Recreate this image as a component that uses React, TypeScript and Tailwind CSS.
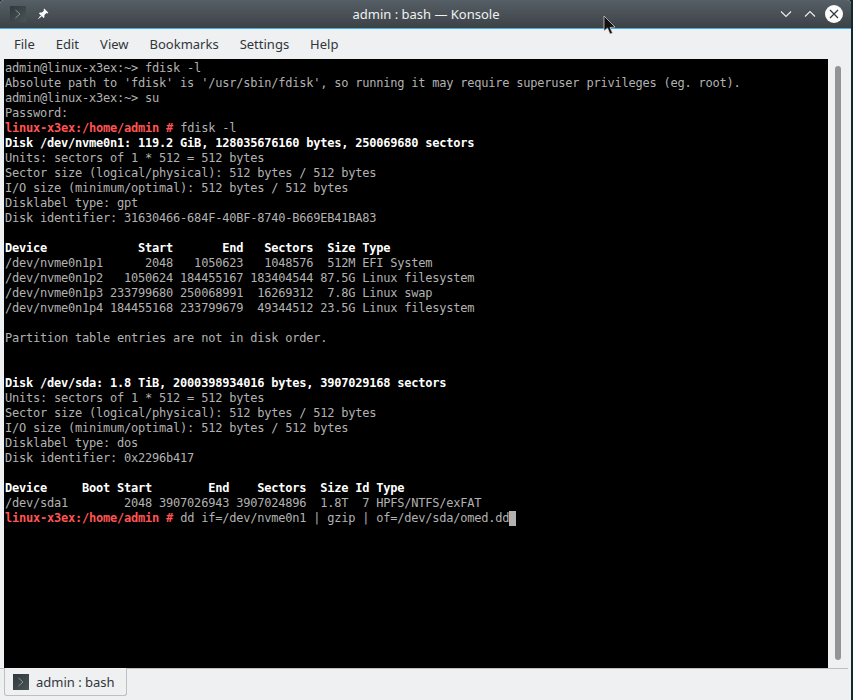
type Line = { text: string; kind?: 'bold' | 'prompt'; rest?: string }

const disk = (name: string, rest: string[]): Line[] => [{ text: name, kind: 'bold' }, ...rest.map((text) => ({ text }))]

const lines: Line[] = [
    { text: 'admin@linux-x3ex:~> fdisk -l' },
    { text: "Absolute path to 'fdisk' is '/usr/sbin/fdisk', so running it may require superuser privileges (eg. root)." },
    { text: 'admin@linux-x3ex:~> su' },
    { text: 'Password:' },
    { text: 'linux-x3ex:/home/admin #', kind: 'prompt', rest: ' fdisk -l' },
    ...disk('Disk /dev/nvme0n1: 119.2 GiB, 128035676160 bytes, 250069680 sectors', [
        'Units: sectors of 1 * 512 = 512 bytes',
        'Sector size (logical/physical): 512 bytes / 512 bytes',
        'I/O size (minimum/optimal): 512 bytes / 512 bytes',
        'Disklabel type: gpt',
        'Disk identifier: 31630466-684F-40BF-8740-B669EB41BA83',
        '',
    ]),
    ...disk('Device             Start       End   Sectors  Size Type', [
        '/dev/nvme0n1p1      2048   1050623   1048576  512M EFI System',
        '/dev/nvme0n1p2   1050624 184455167 183404544 87.5G Linux filesystem',
        '/dev/nvme0n1p3 233799680 250068991  16269312  7.8G Linux swap',
        '/dev/nvme0n1p4 184455168 233799679  49344512 23.5G Linux filesystem',
        '',
        'Partition table entries are not in disk order.',
        '',
        '',
    ]),
    ...disk('Disk /dev/sda: 1.8 TiB, 2000398934016 bytes, 3907029168 sectors', [
        'Units: sectors of 1 * 512 = 512 bytes',
        'Sector size (logical/physical): 512 bytes / 512 bytes',
        'I/O size (minimum/optimal): 512 bytes / 512 bytes',
        'Disklabel type: dos',
        'Disk identifier: 0x2296b417',
        '',
    ]),
    ...disk('Device     Boot Start        End    Sectors  Size Id Type', [
        '/dev/sda1        2048 3907026943 3907024896  1.8T  7 HPFS/NTFS/exFAT',
    ]),
]

const TerminalIcon = ({ className }: { className: string }) => (
    <div className={`flex items-center justify-center bg-gradient-to-br from-[#2f3a3d] to-[#4a5356] ${className}`}>
        <svg width="8" height="10" viewBox="0 0 8 10" fill="none" stroke="#8a9497" strokeWidth="1">
            <path d="M1.5 1 L6 5 L1.5 9" />
        </svg>
    </div>
)

const App = () => {
    return (
        <div className="relative w-[853px] h-[700px] overflow-hidden bg-[#0f2a28]">
            <div className="flex flex-col w-[851px] h-[700px] rounded-t-[4px] overflow-hidden bg-[#eff0f1] font-['Noto_Sans',sans-serif]">
                <div className="flex items-center h-[28px] flex-shrink-0 pl-[10px] pr-[8px] bg-gradient-to-b from-[#565f66] to-[#3c4347]">
                    <TerminalIcon className="w-[16px] h-[16px]" />
                    <svg className="ml-[11px]" width="12" height="12" viewBox="0 0 12 12" fill="#fcfcfc">
                        <path d="M7.2 0.6 L11.4 4.8 L10.4 5.4 L9.4 5 L7.4 7 L7.4 9.2 L6.6 10 L2 5.4 L2.8 4.6 L5 4.6 L7 2.6 L6.6 1.6 Z" />
                        <path d="M3.4 7.4 L4.6 8.6 L0.6 11.4 Z" />
                    </svg>
                    <div className="flex-1 text-center text-[13px] pt-[2px] text-[#eff0f1] pl-[23px]">admin : bash — Konsole</div>
                    <svg width="12" height="8" viewBox="0 0 12 8" fill="none" stroke="#eff0f1" strokeWidth="1.1">
                        <path d="M1 1.5 L6 6.5 L11 1.5" />
                    </svg>
                    <svg className="ml-[12px]" width="12" height="8" viewBox="0 0 12 8" fill="none" stroke="#eff0f1" strokeWidth="1.1">
                        <path d="M1 6.5 L6 1.5 L11 6.5" />
                    </svg>
                    <div className="ml-[9px] flex items-center justify-center w-[18px] h-[18px] rounded-full bg-[#fcfcfc]">
                        <svg width="10" height="10" viewBox="0 0 10 10" fill="none" stroke="#31363b" strokeWidth="1.2">
                            <path d="M1 1 L9 9 M9 1 L1 9" />
                        </svg>
                    </div>
                </div>
                <div className="h-px flex-shrink-0 bg-[#3daee9]" />
                <div className="flex items-center gap-[21px] h-[30px] flex-shrink-0 pl-[14px] pt-[2px] text-[13px] text-[#31363b]">
                    <span>File</span>
                    <span>Edit</span>
                    <span>View</span>
                    <span>Bookmarks</span>
                    <span>Settings</span>
                    <span>Help</span>
                </div>
                <div className="flex h-[609px] flex-shrink-0 pl-[4px]">
                    <div className="w-[824px] bg-black pl-px pt-[2px] overflow-hidden font-['DejaVu_Sans_Mono',monospace] text-[12px] tracking-[-0.22px] leading-[15px] text-[#b2b2b2] whitespace-pre">
                        {lines.map((line, i) => (
                            <div key={i} className="h-[15px]">
                                {line.kind === 'bold' && <span className="font-bold text-white">{line.text}</span>}
                                {line.kind === 'prompt' && <span className="font-bold text-[#ff5454]">{line.text}</span>}
                                {!line.kind && line.text}
                                {line.rest}
                            </div>
                        ))}
                        <div className="flex h-[15px]">
                            <span className="font-bold text-[#ff5454]">linux-x3ex:/home/admin #</span>
                            <span> dd if=/dev/nvme0n1 | gzip | of=/dev/sda/omed.dd</span>
                            <span className="w-[7px] h-[15px] bg-[#b2b2b2]" />
                        </div>
                    </div>
                    <div className="flex-1 pl-[7px] pt-[7px] pb-[8px]">
                        <div className="w-[6px] h-full rounded-[3px] bg-[#949494]" />
                    </div>
                </div>
                <div className="flex-1 border-t border-[#bdbfc1] mr-[3px] pl-[4px]">
                    <div className="-mt-px flex items-center w-[123px] h-[28px] pl-[8px] pt-px bg-[#eff0f1] border border-t-0 border-[#bdbfc1] rounded-b-[3px] text-[13px] text-[#31363b]">
                        <TerminalIcon className="w-[16px] h-[16px]" />
                        <span className="ml-[7px] pt-[2px]">admin : bash</span>
                    </div>
                </div>
            </div>
            <svg className="absolute left-[603px] top-[15px]" width="13" height="21" viewBox="0 0 13 21">
                <path d="M1 1 L1 16 L4.5 13 L7 19 L9.5 18 L7 12.5 L12 12 Z" fill="#111" stroke="#ddd" strokeWidth="0.7" />
            </svg>
        </div>
    )
}

export default App
